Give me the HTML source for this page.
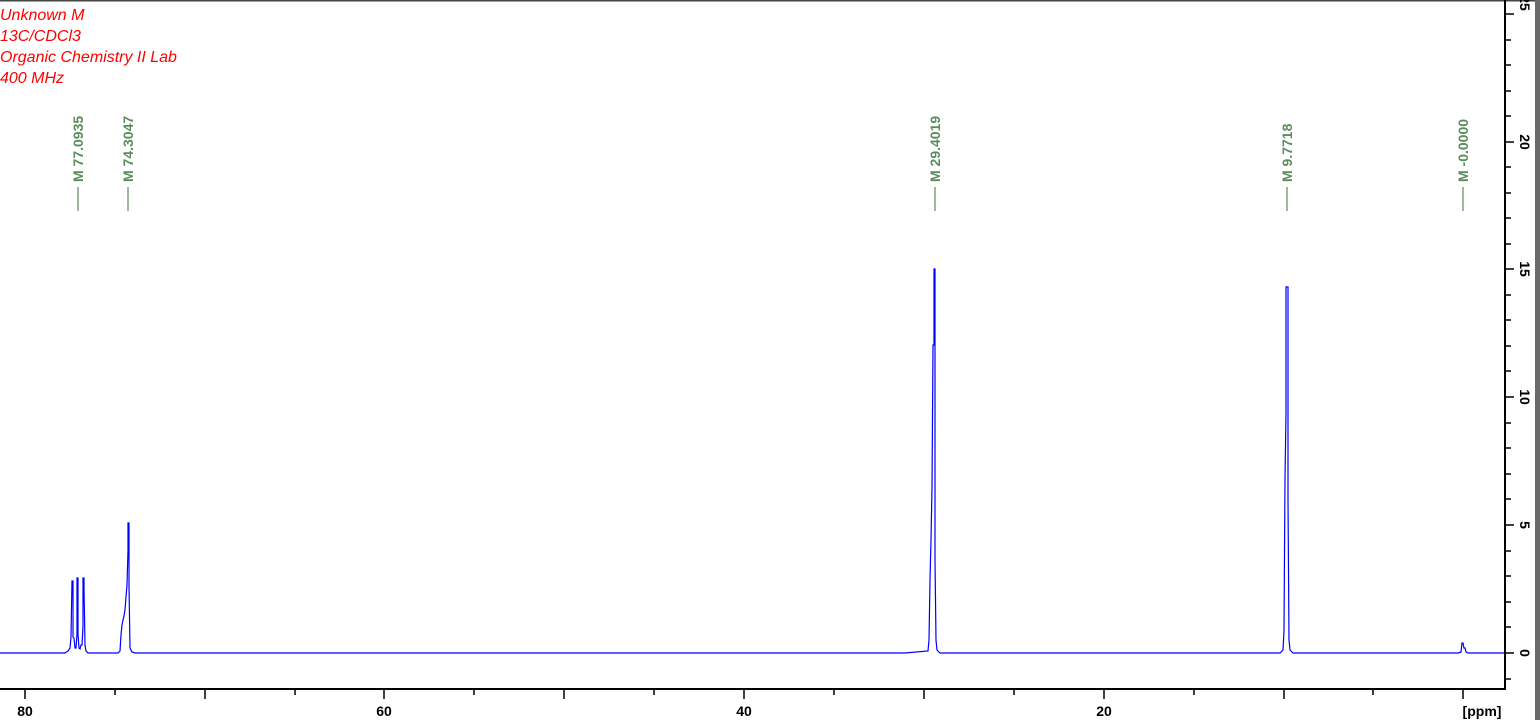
<!DOCTYPE html>
<html><head><meta charset="utf-8"><style>
html,body{margin:0;padding:0;background:#fff;width:1540px;height:720px;overflow:hidden}
svg{display:block}
</style></head><body>
<svg width="1540" height="720" viewBox="0 0 1540 720" xmlns="http://www.w3.org/2000/svg">
<rect width="1540" height="720" fill="#fff"/>
<line x1="0" y1="0.5" x2="1536" y2="0.5" stroke="#444" stroke-width="2"/>
<rect x="1535" y="0" width="5" height="720" fill="#6a6a6a"/>
<g font-family="Liberation Sans, sans-serif" font-style="italic" font-size="16" fill="#ff0000">
<text x="0" y="20">Unknown M</text>
<text x="0" y="41">13C/CDCl3</text>
<text x="0" y="62">Organic Chemistry II Lab</text>
<text x="0" y="83">400 MHz</text>
</g>
<g stroke="#000" stroke-width="2" fill="none">
<line x1="0" y1="689" x2="1506" y2="689"/>
<line x1="1505" y1="0" x2="1505" y2="690"/>
</g>
<g stroke="#000" stroke-width="1.5">
<line x1="25" y1="689" x2="25" y2="699"/>
<line x1="115" y1="689" x2="115" y2="695"/>
<line x1="205" y1="689" x2="205" y2="699"/>
<line x1="295" y1="689" x2="295" y2="695"/>
<line x1="384" y1="689" x2="384" y2="699"/>
<line x1="474" y1="689" x2="474" y2="695"/>
<line x1="564" y1="689" x2="564" y2="699"/>
<line x1="654" y1="689" x2="654" y2="695"/>
<line x1="744" y1="689" x2="744" y2="699"/>
<line x1="834" y1="689" x2="834" y2="695"/>
<line x1="924" y1="689" x2="924" y2="699"/>
<line x1="1014" y1="689" x2="1014" y2="695"/>
<line x1="1104" y1="689" x2="1104" y2="699"/>
<line x1="1194" y1="689" x2="1194" y2="695"/>
<line x1="1284" y1="689" x2="1284" y2="699"/>
<line x1="1373" y1="689" x2="1373" y2="695"/>
<line x1="1463" y1="689" x2="1463" y2="699"/>
</g>
<g font-family="Liberation Sans, sans-serif" font-weight="bold" font-size="14" fill="#000" text-anchor="middle">
<text x="25" y="716">80</text>
<text x="384" y="716">60</text>
<text x="744" y="716">40</text>
<text x="1104" y="716">20</text>
<text x="1482" y="716">[ppm]</text>
</g>
<g stroke="#000" stroke-width="1.5">
<line x1="1505" y1="679" x2="1511" y2="679"/>
<line x1="1505" y1="653" x2="1514" y2="653"/>
<line x1="1505" y1="627" x2="1511" y2="627"/><line x1="1505" y1="602" x2="1511" y2="602"/><line x1="1505" y1="576" x2="1511" y2="576"/><line x1="1505" y1="551" x2="1511" y2="551"/>
<line x1="1505" y1="525" x2="1514" y2="525"/>
<line x1="1505" y1="499" x2="1511" y2="499"/><line x1="1505" y1="474" x2="1511" y2="474"/><line x1="1505" y1="448" x2="1511" y2="448"/><line x1="1505" y1="423" x2="1511" y2="423"/>
<line x1="1505" y1="397" x2="1514" y2="397"/>
<line x1="1505" y1="371" x2="1511" y2="371"/><line x1="1505" y1="346" x2="1511" y2="346"/><line x1="1505" y1="320" x2="1511" y2="320"/><line x1="1505" y1="295" x2="1511" y2="295"/>
<line x1="1505" y1="269" x2="1514" y2="269"/>
<line x1="1505" y1="244" x2="1511" y2="244"/><line x1="1505" y1="218" x2="1511" y2="218"/><line x1="1505" y1="193" x2="1511" y2="193"/><line x1="1505" y1="167" x2="1511" y2="167"/>
<line x1="1505" y1="142" x2="1514" y2="142"/>
<line x1="1505" y1="116" x2="1511" y2="116"/><line x1="1505" y1="91" x2="1511" y2="91"/><line x1="1505" y1="65" x2="1511" y2="65"/><line x1="1505" y1="40" x2="1511" y2="40"/>
<line x1="1505" y1="14" x2="1514" y2="14"/>
</g>
<g font-family="Liberation Sans, sans-serif" font-weight="bold" font-size="14" fill="#000" text-anchor="middle">
<text transform="translate(1520,653) rotate(90)">0</text>
<text transform="translate(1520,525) rotate(90)">5</text>
<text transform="translate(1520,397) rotate(90)">10</text>
<text transform="translate(1520,269) rotate(90)">15</text>
<text transform="translate(1520,142) rotate(90)">20</text>
<text transform="translate(1520,3) rotate(90)">25</text>
</g>
<g font-family="Liberation Sans, sans-serif" font-weight="bold" font-size="14" fill="#5b8c5b" text-anchor="start">
<text transform="translate(83,182) rotate(-90)">M 77.0935</text>
<text transform="translate(133,182) rotate(-90)">M 74.3047</text>
<text transform="translate(940,182) rotate(-90)">M 29.4019</text>
<text transform="translate(1292,182) rotate(-90)">M 9.7718</text>
<text transform="translate(1468,182) rotate(-90)">M -0.0000</text>
</g>
<g stroke="#5b8c5b" stroke-width="1.2">
<line x1="78" y1="187" x2="78" y2="211"/>
<line x1="128" y1="187" x2="128" y2="211"/>
<line x1="935" y1="187" x2="935" y2="211"/>
<line x1="1287" y1="187" x2="1287" y2="211"/>
<line x1="1463" y1="187" x2="1463" y2="211"/>
</g>
<polyline fill="none" stroke="#0000ff" stroke-width="1.2" points="
0,653 65,653 68,651 70,648 71,637 72,581 73,581 73,637 74,638 75,648 76,648 77,634 77,578 78,578 78,634 79,648 80,649 81,645 82,645 83,626 83,578 84,578 84,588 85,645 86,651 88,653
118,653 120,651 121,635 122,625 123,620 124,616 125,610 126,597 127,585 128,550 128,523 129,523 129,585 130,648 132,652 135,653
905,653 928,651 929,640 930,580 931,540 932,488 933,345 934,345 934,269 935,269 935,560 936,640 937,650 940,653
1280,653 1283,650 1284,630 1285,478 1286,413 1286,287 1288,287 1288,500 1289,640 1290,650 1293,653
1458,653 1461,652 1462,643 1463,643 1464,648 1465,648 1466,652 1468,653 1504,653"/>
</svg>
</body></html>
